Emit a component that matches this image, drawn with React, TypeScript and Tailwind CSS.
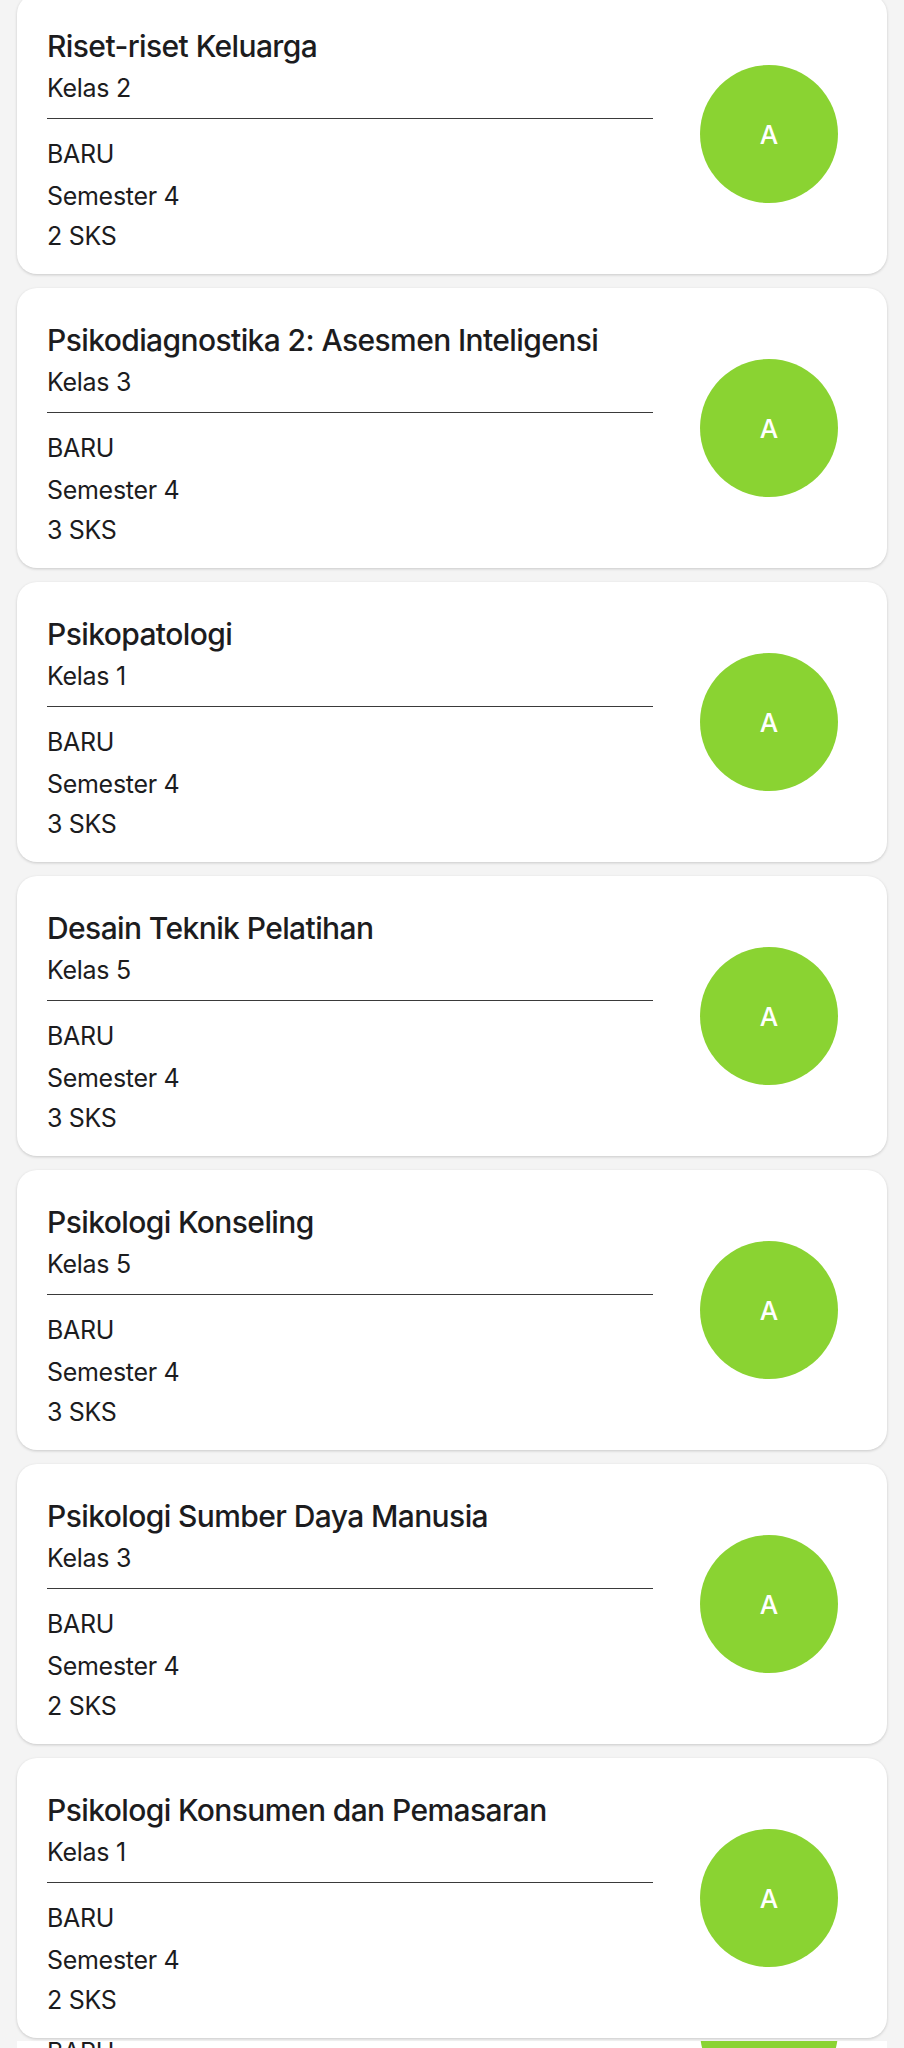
import React from 'react';

type Course = {
  title: string;
  kelas: string;
  sks: string;
};

const courses: Course[] = [
  { title: 'Riset-riset Keluarga', kelas: 'Kelas 2', sks: '2 SKS' },
  { title: 'Psikodiagnostika 2: Asesmen Inteligensi', kelas: 'Kelas 3', sks: '3 SKS' },
  { title: 'Psikopatologi', kelas: 'Kelas 1', sks: '3 SKS' },
  { title: 'Desain Teknik Pelatihan', kelas: 'Kelas 5', sks: '3 SKS' },
  { title: 'Psikologi Konseling', kelas: 'Kelas 5', sks: '3 SKS' },
  { title: 'Psikologi Sumber Daya Manusia', kelas: 'Kelas 3', sks: '2 SKS' },
  { title: 'Psikologi Konsumen dan Pemasaran', kelas: 'Kelas 1', sks: '2 SKS' },
];

const CourseCard: React.FC<{ course: Course }> = ({ course }) => {
  return (
    <div className="flex items-center rounded-[20px] bg-white py-[18px] pl-[30px] pr-[48px] shadow-[0_1px_3px_rgba(0,0,0,0.18)]">
      <div className="w-[606px] text-[#1c1c1e]">
        <h2 className="mt-[14px] text-[30px] leading-[40px] font-medium tracking-[-0.6px]">{course.title}</h2>
        <p className="mt-[2px] text-[25px] leading-[40px] tracking-[-0.3px]">{course.kelas}</p>
        <div className="mt-[10px] h-px bg-[#3a3a3a]" />
        <p className="mt-[15px] text-[25px] leading-[40px] tracking-[-0.3px]">BARU</p>
        <p className="mt-[2px] text-[25px] leading-[40px] tracking-[-0.3px]">Semester 4</p>
        <p className="text-[25px] leading-[40px] tracking-[-0.3px]">{course.sks}</p>
      </div>
      <div className="ml-[47px] flex h-[138px] w-[138px] shrink-0 items-center justify-center rounded-full bg-[#8ad332]">
        <span className="text-[26px] font-medium text-white">A</span>
      </div>
    </div>
  );
};

export default function App() {
  return (
    <div
      className="h-[2048px] overflow-hidden bg-[#f4f4f4]"
      style={{ fontFamily: 'Inter, "Noto Sans", sans-serif' }}
    >
      <div className="-mt-[6px] flex flex-col gap-[14px] px-[17px]">
        {courses.map((c) => (
          <CourseCard key={c.title} course={c} />
        ))}
      </div>

      {/* next card peeking in under the last one */}
      <div className="mx-[17px] mt-[3px] flex h-[40px] items-start overflow-hidden bg-white pl-[30px] pr-[48px]">
        <p className="mt-[-9px] w-[606px] text-[25px] leading-[40px] tracking-[-0.3px] text-[#1c1c1e]">BARU</p>
        <div className="ml-[47px] -mt-[79px] h-[138px] w-[138px] shrink-0 rounded-full bg-[#8ad332]" />
      </div>
    </div>
  );
}
